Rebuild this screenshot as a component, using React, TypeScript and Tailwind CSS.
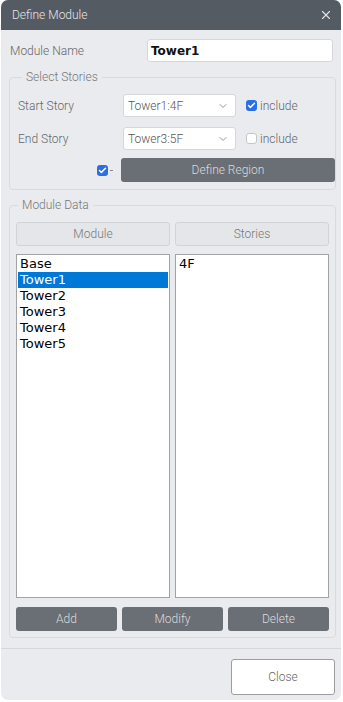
import { X, ChevronDown, Check } from "lucide-react";

const modules = ["Base", "Tower1", "Tower2", "Tower3", "Tower4", "Tower5"];

function CheckBox({ checked }: { checked: boolean }) {
    return checked ? (
        <span className="flex h-[11px] w-[11px] items-center justify-center rounded-[3px] bg-[#2a6fe3]">
            <Check size={9} strokeWidth={4} className="text-white" />
        </span>
    ) : (
        <span className="h-[11px] w-[11px] rounded-[3px] border border-[#c4c6ca] bg-white" />
    );
}

function StorySelect({ value }: { value: string }) {
    return (
        <div className="flex h-[23px] w-[113px] items-center justify-between rounded-[3px] border border-[#d6d7db] bg-white pl-[4px] pr-[6px] text-[12px] text-[#555]">
            <span>{value}</span>
            <ChevronDown size={12} className="text-[#999]" />
        </div>
    );
}

export default function App() {
    return (
        <div className="h-[702px] w-[343px] bg-white pl-px font-['Roboto',sans-serif] font-light">
            <div className="flex h-[700px] w-[340px] flex-col overflow-hidden rounded-[7px] bg-[#eaebef]">
                {/* Title bar */}
                <div className="flex h-[30px] shrink-0 items-center justify-between bg-[#555b63] pl-[11px] pr-[8px]">
                    <span className="text-[12px] text-[#e6e6e6]">Define Module</span>
                    <X size={14} className="text-[#e0e0e0]" />
                </div>

                <div className="flex flex-col px-[8px] pt-[9px]">
                    {/* Module Name */}
                    <div className="flex h-[23px] items-center justify-between">
                        <span className="pl-px text-[12px] text-[#666]">Module Name</span>
                        <div className="flex h-[23px] w-[186px] items-center rounded-[3px] border border-[#d6d7db] bg-white pl-[3px] font-['DejaVu_Sans',sans-serif] text-[12px] font-bold text-[#111]">
                            Tower1
                        </div>
                    </div>

                    {/* Select Stories */}
                    <fieldset className="mt-[7px] w-[327px] rounded-[4px] border border-[#d9dade] pb-[7px] pl-[8px]">
                        <legend className="ml-[4px] px-[4px] text-[12px] leading-[16px] text-[#777]">Select Stories</legend>
                        <div className="flex flex-col gap-[10px] pt-[9px]">
                            <div className="flex items-center">
                                <span className="w-[105px] text-[12px] text-[#666]">Start Story</span>
                                <StorySelect value="Tower1:4F" />
                                <div className="ml-[10px] flex items-center gap-[3px] text-[12px] text-[#666]">
                                    <CheckBox checked />
                                    <span>include</span>
                                </div>
                            </div>
                            <div className="flex items-center">
                                <span className="w-[105px] text-[12px] text-[#666]">End Story</span>
                                <StorySelect value="Tower3:5F" />
                                <div className="ml-[10px] flex items-center gap-[3px] text-[12px] text-[#666]">
                                    <CheckBox checked={false} />
                                    <span>include</span>
                                </div>
                            </div>
                        </div>
                        <div className="mt-[8px] flex items-center justify-end">
                            <CheckBox checked />
                            <span className="ml-[2px] h-px w-[3px] bg-[#888]" />
                            <div className="ml-[8px] flex h-[24px] w-[214px] items-center justify-center rounded-[3px] bg-[#6a6e75] text-[12px] text-[#dcdcdc]">
                                Define Region
                            </div>
                        </div>
                    </fieldset>

                    {/* Module Data */}
                    <fieldset className="mt-[7px] w-[327px] rounded-[4px] border border-[#d9dade] px-[6px] pb-[6px]">
                        <legend className="ml-[2px] px-[4px] text-[12px] leading-[16px] text-[#777]">Module Data</legend>
                        <div className="grid grid-cols-2 gap-[5px] pt-[9px]">
                            <div className="flex h-[24px] items-center justify-center rounded-[3px] border border-[#d2d3d7] bg-[#e5e6ea] text-[12px] text-[#777]">
                                Module
                            </div>
                            <div className="flex h-[24px] items-center justify-center rounded-[3px] border border-[#d2d3d7] bg-[#e5e6ea] text-[12px] text-[#777]">
                                Stories
                            </div>
                        </div>
                        <div className="mt-[8px] grid grid-cols-2 gap-[5px]">
                            <div className="h-[344px] border border-[#a3a3a3] bg-white p-px font-['DejaVu_Sans',sans-serif] text-[13px] font-normal text-black">
                                {modules.map((m) => (
                                    <div
                                        key={m}
                                        className={
                                            m === "Tower1"
                                                ? "h-[16px] bg-[#0078d7] pl-[2px] leading-[16px] text-white"
                                                : "h-[16px] pl-[2px] leading-[16px]"
                                        }
                                    >
                                        {m}
                                    </div>
                                ))}
                            </div>
                            <div className="h-[344px] border border-[#a3a3a3] bg-white p-px font-['DejaVu_Sans',sans-serif] text-[13px] font-normal text-black">
                                <div className="h-[16px] pl-[2px] leading-[16px]">4F</div>
                            </div>
                        </div>
                        <div className="mt-[9px] grid grid-cols-3 gap-[5px]">
                            <div className="flex h-[24px] items-center justify-center rounded-[3px] bg-[#6a6e75] text-[12px] text-[#dcdcdc]">Add</div>
                            <div className="flex h-[24px] items-center justify-center rounded-[3px] bg-[#6a6e75] text-[12px] text-[#dcdcdc]">Modify</div>
                            <div className="flex h-[24px] items-center justify-center rounded-[3px] bg-[#6a6e75] text-[12px] text-[#dcdcdc]">Delete</div>
                        </div>
                    </fieldset>
                </div>

                {/* Footer */}
                <div className="mt-[10px] h-px bg-[#d6d7db]" />
                <div className="flex justify-end px-[6px] pt-[10px]">
                    <div className="flex h-[36px] w-[104px] items-center justify-center rounded-[3px] border border-[#9d9d9d] bg-white text-[12px] text-[#666]">
                        Close
                    </div>
                </div>
            </div>
        </div>
    );
}
